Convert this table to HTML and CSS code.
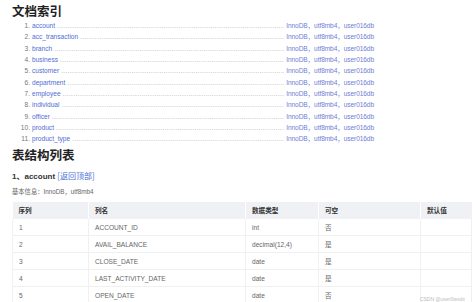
FILE: index.html
```html
<!DOCTYPE html>
<html lang="zh">
<head>
<meta charset="utf-8">
<link rel="stylesheet" href="styles.css">
</head>
<body>
<div class="page">
  <h1 class="title">文档索引</h1>
  <ol class="toc">
    <li><span class="num">1.</span><a class="name">account</a><span class="dots"></span><span class="meta">InnoDB，utf8mb4，user016db</span></li>
    <li><span class="num">2.</span><a class="name">acc_transaction</a><span class="dots"></span><span class="meta">InnoDB，utf8mb4，user016db</span></li>
    <li><span class="num">3.</span><a class="name">branch</a><span class="dots"></span><span class="meta">InnoDB，utf8mb4，user016db</span></li>
    <li><span class="num">4.</span><a class="name">business</a><span class="dots"></span><span class="meta">InnoDB，utf8mb4，user016db</span></li>
    <li><span class="num">5.</span><a class="name">customer</a><span class="dots"></span><span class="meta">InnoDB，utf8mb4，user016db</span></li>
    <li><span class="num">6.</span><a class="name">department</a><span class="dots"></span><span class="meta">InnoDB，utf8mb4，user016db</span></li>
    <li><span class="num">7.</span><a class="name">employee</a><span class="dots"></span><span class="meta">InnoDB，utf8mb4，user016db</span></li>
    <li><span class="num">8.</span><a class="name">individual</a><span class="dots"></span><span class="meta">InnoDB，utf8mb4，user016db</span></li>
    <li><span class="num">9.</span><a class="name">officer</a><span class="dots"></span><span class="meta">InnoDB，utf8mb4，user016db</span></li>
    <li><span class="num">10.</span><a class="name">product</a><span class="dots"></span><span class="meta">InnoDB，utf8mb4，user016db</span></li>
    <li><span class="num">11.</span><a class="name">product_type</a><span class="dots"></span><span class="meta">InnoDB，utf8mb4，user016db</span></li>
  </ol>
  <h1 class="title title2">表结构列表</h1>
  <h2 class="tname">1、account <a class="back">[返回顶部]</a></h2>
  <p class="info">基本信息：InnoDB，utf8mb4</p>
  <table class="grid">
    <thead>
      <tr><th class="c1">序列</th><th class="c2">列名</th><th class="c3">数据类型</th><th class="c4">可空</th><th class="c5">默认值</th></tr>
    </thead>
    <tbody>
      <tr><td>1</td><td>ACCOUNT_ID</td><td>int</td><td>否</td><td></td></tr>
      <tr><td>2</td><td>AVAIL_BALANCE</td><td>decimal(12,4)</td><td>是</td><td></td></tr>
      <tr><td>3</td><td>CLOSE_DATE</td><td>date</td><td>是</td><td></td></tr>
      <tr><td>4</td><td>LAST_ACTIVITY_DATE</td><td>date</td><td>是</td><td></td></tr>
      <tr><td>5</td><td>OPEN_DATE</td><td>date</td><td>否</td><td class="wm-cell"><span class="wm">CSDN @user0tesdx</span></td></tr>
    </tbody>
  </table>
</div>
</body>
</html>
```
FILE: styles.css
```css
* { box-sizing: border-box; }
html, body { margin: 0; padding: 0; background: #fff; }
body {
  font-family: "Liberation Sans", "Noto Sans CJK SC", sans-serif;
  color: #333;
  overflow: hidden;
}
.page { padding: 3px 2px 0 12px; }
.title {
  margin: 0;
  font-size: 12.5px;
  line-height: 16px;
  font-weight: bold;
  color: #222;
  font-family: "Noto Sans CJK SC", sans-serif;
}
.toc {
  list-style: none;
  margin: 1px 0 0 0;
  padding: 0;
  width: 362px;
}
.toc li {
  display: flex;
  align-items: baseline;
  height: 11.35px;
  font-size: 6.6px;
  line-height: 11.35px;
  white-space: nowrap;
}
.num {
  width: 20px;
  text-align: right;
  padding-right: 2px;
  color: #777;
}
.name { color: #4f6ed6; }
.dots {
  flex: 1;
  overflow: hidden;
  color: #aaa;
  margin: 0 2px;
  letter-spacing: 0.3px;
}
.dots::after {
  content: "....................................................................................................................................................................................................................................................................................................................";
}
.meta { color: #6f80d6; letter-spacing: -0.1px; }
.title2 { margin-top: 2px; }
.tname {
  margin: 7px 0 0 0;
  font-size: 8px;
  line-height: 12px;
  font-weight: bold;
  color: #333;
}
.back { color: #4f6ed6; font-weight: normal; font-family: "Noto Sans CJK SC", sans-serif; }
.info {
  margin: 4px 0 0 0;
  font-size: 6.3px;
  line-height: 10px;
  color: #666;
}
.grid {
  margin-top: 5px;
  border-collapse: collapse;
  width: 460px;
  font-size: 6.6px;
  table-layout: fixed;
}
.grid th {
  background: #eff1f4;
  height: 17px;
  text-align: left;
  font-weight: bold;
  color: #333;
  padding: 0 0 0 6px;
  border-left: 1px solid #fff;
  font-family: "Noto Sans CJK SC", sans-serif;
}
.grid th:first-child { border-left: none; }
.grid td {
  height: 17px;
  padding: 0 0 0 6px;
  color: #666;
  border-bottom: 1px solid #eef0f2;
  border-left: 1px solid #f0f0f0;
  font-family: "Liberation Sans", "Noto Sans CJK SC", sans-serif;
}
.grid td:first-child { border-left: 1px solid #eef0f2; }
.grid td:last-child { border-right: 1px solid #eef0f2; }
.c1 { width: 76px; }
.c2 { width: 157px; }
.c3 { width: 73px; }
.c4 { width: 102px; }
.wm-cell { position: relative; }
.wm {
  position: absolute;
  right: 6px;
  bottom: 1px;
  font-size: 5px;
  color: #bbb;
  white-space: nowrap;
}
```
